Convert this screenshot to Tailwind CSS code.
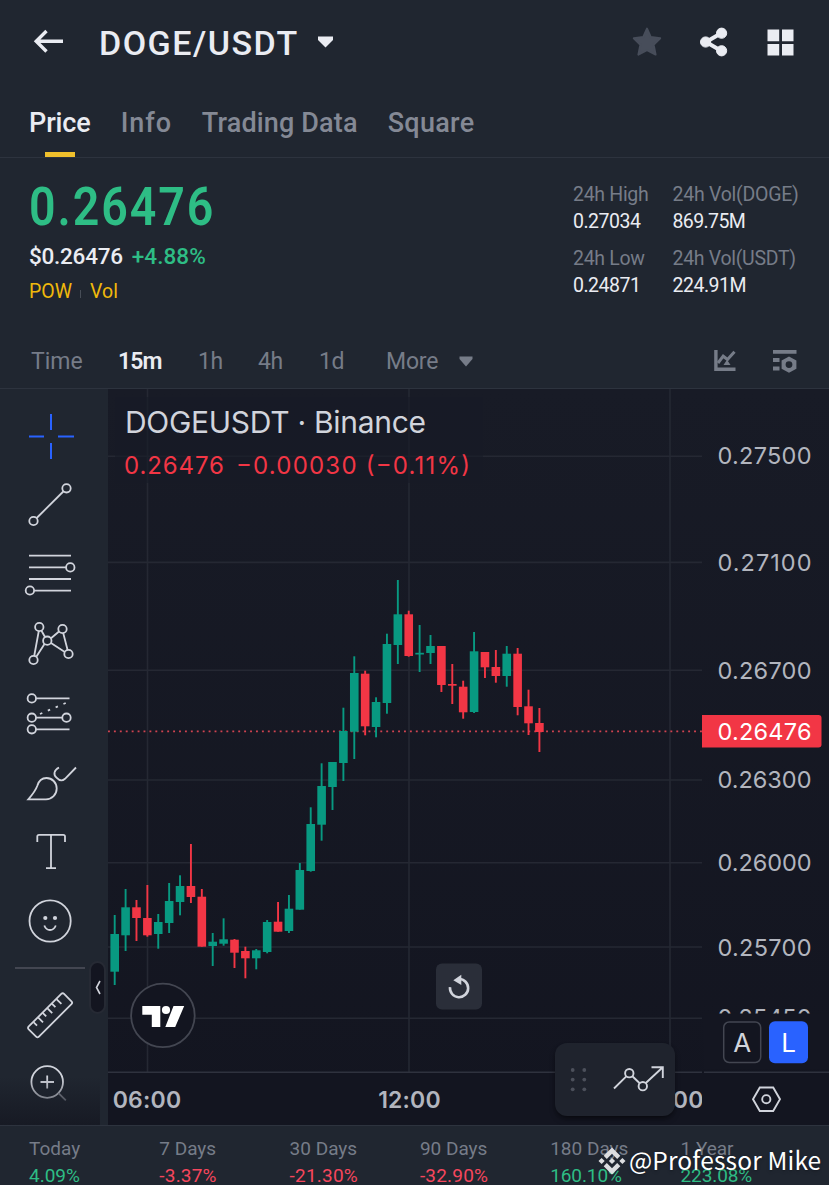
<!DOCTYPE html>
<html lang="en">
<head>
  <meta charset="UTF-8" />
  <meta name="viewport" content="width=device-width, initial-scale=1.0"/>
  <title>DOGE/USDT</title>
  <script src="https://cdn.jsdelivr.net/npm/@tailwindcss/browser@4"></script>
</head>
<body class="bg-[#202630] text-[#eaecf2] font-['Roboto',sans-serif] w-[829px] h-[1185px] overflow-hidden flex flex-col">
  <!-- header -->
  <header class="h-[86px] shrink-0 flex items-center pl-[33px] pr-[35px]">
    <svg class="w-[31px] h-[24px] -mt-1" viewBox="0 0 31 24" fill="none" stroke="#eaecf2" stroke-width="3.4"><path d="M30 12.2H3M13.5 2L3.2 12.2L13.5 22.5"/></svg>
    <h1 class="ml-[35px] text-[34px] font-medium leading-none tracking-[1.5px] whitespace-nowrap">DOGE/USDT</h1>
    <svg class="ml-[18px] w-[17px] h-[12px] -mt-[2px]" viewBox="0 0 17 12" fill="#eaecf2"><path d="M1 0.5H16V4L8.5 11.5L1 4z"/></svg>
    <div class="ml-auto flex items-center gap-[38px] -mt-[2px]">
      <svg class="w-[30px] h-[30px]" viewBox="0 0 30 30" fill="#474d5a" stroke="#474d5a" stroke-width="2" stroke-linejoin="round"><path d="M15 1.6L18.8 10.1L28.2 11.2L21.6 17.8L23.6 27.6L15 23.2L6.4 27.6L8.4 17.8L1.8 11.2L11.2 10.1z"/></svg>
      <svg class="w-[30px] h-[30px] -ml-px" viewBox="0 0 30 30" fill="#eaecf2" stroke="#eaecf2"><path d="M22.5 6L7 15L22.5 24" fill="none" stroke-width="4"/><circle cx="22.6" cy="6.2" r="5.1"/><circle cx="6.6" cy="15" r="5.1"/><circle cx="22.6" cy="23.8" r="5.1"/></svg>
      <svg class="w-[27px] h-[27px]" viewBox="0 0 27 27" fill="#eaecf2"><path d="M0.5 0.5h11.7v11.7H.5zM15 .5h11.5v11.7H15zM.5 15h11.7v11.5H.5zM15 15h11.5v11.5H15z"/></svg>
    </div>
  </header>

  <!-- tabs -->
  <nav class="h-[72px] shrink-0 flex items-start gap-[30px] pl-[29px] pt-[21px] border-b border-[#2d333e] text-[27px] leading-[32px] font-medium text-[#848995] whitespace-nowrap">
    <div class="relative text-[#eaecf2] h-[50px] tracking-[-0.1px]">Price<span class="absolute left-[16px] bottom-0 w-[30px] h-[5px] bg-[#f0c02c]"></span></div>
    <div class="tracking-[0.9px]">Info</div>
    <div class="tracking-[0.15px]">Trading Data</div>
    <div class="tracking-[0.3px]">Square</div>
  </nav>

  <!-- ticker -->
  <section class="h-[176px] shrink-0 flex justify-between pl-[29px] pr-[29px] whitespace-nowrap">
    <div class="pt-[23px]">
      <div class="w-[190px] origin-left scale-x-[0.87] text-[53.5px] leading-[52px] font-semibold text-[#2ebd85] tracking-[2.2px]">0.26476</div>
      <div class="mt-[9px] flex gap-[9px] text-[22.5px] leading-[28px] font-medium"><span class="tracking-[-0.25px]">$0.26476</span><span class="tracking-[0.05px] text-[#2ebd85]">+4.88%</span></div>
      <div class="mt-[9px] flex items-center text-[19.5px] leading-[26px] text-[#f0b90b]"><span>POW</span><span class="w-px h-[8px] bg-[#474d57] ml-[8px] mr-[9px] mt-1"></span><span>Vol</span></div>
    </div>
    <div class="pt-[24px] grid grid-cols-[99.5px_127.5px] grid-rows-[27px_37px_27px_26px] text-[19.5px] leading-[26px]">
      <div class="text-[#767c88] tracking-[-0.3px]">24h High</div><div class="text-[#767c88] tracking-[-0.25px]">24h Vol(DOGE)</div>
      <div class="tracking-[-0.5px]">0.27034</div><div class="tracking-[-0.6px]">869.75M</div>
      <div class="text-[#767c88] tracking-[-0.3px]">24h Low</div><div class="text-[#767c88] tracking-[-0.3px]">24h Vol(USDT)</div>
      <div class="tracking-[-0.5px]">0.24871</div><div class="tracking-[-0.5px]">224.91M</div>
    </div>
  </section>

  <!-- intervals -->
  <div class="h-[55px] shrink-0 flex items-center pt-[2px] pl-[31px] pr-[31px] border-b border-[#2d333e] text-[23px] text-[#767c88] whitespace-nowrap">
    <span class="w-[87px]">Time</span>
    <span class="w-[80px] text-[#eaecf2] font-semibold tracking-[-0.9px]">15m</span>
    <span class="w-[60px] tracking-[-0.4px]">1h</span>
    <span class="w-[61px] tracking-[-0.4px]">4h</span>
    <span class="w-[67px] tracking-[-0.4px]">1d</span>
    <span class="w-[73px] tracking-[-0.2px]">More</span>
    <svg class="w-[14px] h-[11px] -mt-[2px]" viewBox="0 0 14 11" fill="#767c88"><path d="M0.5 0.5h13v2.5L7 10.5L.5 3z"/></svg>
    <svg class="ml-auto w-[22px] h-[22px] -mt-[2px]" viewBox="0 0 22 22" fill="none" stroke="#767c88" stroke-width="3.4"><path d="M1.9 0V19.3H21.5"/><path d="M4 13L9.2 6.2L13.5 9.5L20.5 1.8" stroke-width="3"/><path d="M9.5 15L13 9.8L16.5 15z" fill="#767c88" stroke="none"/></svg>
    <svg class="ml-[36px] w-[26px] h-[24px] -mt-[2px]" viewBox="0 0 26 24" fill="#767c88"><path d="M1 1h23.5v3.8H1zM1 9h6.5v4H1zM1 17.5h6.5v4H1z"/><path fill-rule="evenodd" d="M17 7.4L24.4 11.4V19.8L17 23.8L9.6 19.8V11.4zM17 12.2a3.4 3.4 0 100 6.8a3.4 3.4 0 000-6.8z"/></svg>
  </div>

  <!-- chart -->
  <main class="h-[736px] shrink-0 flex relative">
    <aside class="w-[108px] pt-[13px] relative flex flex-col">
      <svg class="w-[100px] h-[69px]" viewBox="0 402 100 69" stroke="#2962ff" stroke-width="2"><path d="M51 414V430M51 443V459M29 436.5H44M58 436.5H74"/></svg>
      <svg class="w-[100px] h-[69px]" viewBox="0 471 100 69" fill="none" stroke="#d1d4dc" stroke-width="1.8"><path d="M63.3 491.5L36.7 518"/><circle cx="66.5" cy="488.3" r="4.2"/><circle cx="33.5" cy="521" r="4.2"/></svg>
      <svg class="w-[100px] h-[69px]" viewBox="0 540 100 69" fill="none" stroke="#d1d4dc" stroke-width="1.8"><path d="M29 555.6H71M29 567.4H66M29 579H71M34 590.6H71"/><circle cx="70.3" cy="567.4" r="4.2"/><circle cx="29.9" cy="590.5" r="4.2"/></svg>
      <svg class="w-[100px] h-[69px]" viewBox="0 609 100 69" fill="none" stroke="#d1d4dc" stroke-width="1.8"><path d="M38.8 631L34.2 656M41.5 630.7L45 637M51 638.3L59 631.5M63.2 633L67.6 650M64.8 652L51 643M44.5 644L36.3 656.8"/><circle cx="39.3" cy="627" r="4.2"/><circle cx="62.5" cy="629" r="4.2"/><circle cx="47.3" cy="640.7" r="4.2"/><circle cx="68.5" cy="654" r="4.2"/><circle cx="33.5" cy="660" r="4.2"/></svg>
      <svg class="w-[100px] h-[69px]" viewBox="0 678 100 69" fill="none" stroke="#d1d4dc" stroke-width="1.8"><path d="M36 698.4H69.5M36 717.7H62.3M36 729.3H69.5"/><path d="M40 714L68 702" stroke-dasharray="2.5 6"/><circle cx="31.8" cy="698.4" r="4.2"/><circle cx="31.8" cy="717.7" r="4.2"/><circle cx="66.5" cy="717.7" r="4.2"/><circle cx="31.8" cy="729.3" r="4.2"/></svg>
      <svg class="w-[100px] h-[69px]" viewBox="0 747 100 69" fill="none" stroke="#d1d4dc" stroke-width="1.8"><path d="M28.3 799.3H46C52 799 56.7 794.5 56.7 788.5C56.7 782.5 52 778 46.5 778C41 778 38.5 781.5 37.2 786C35.8 790 32.5 794.5 28.3 799.3z"/><path d="M59 767.5C54 770 53 774.5 56.5 777.7C59.5 781 62.5 781 65 778.8L76 767.5"/></svg>
      <svg class="w-[100px] h-[69px]" viewBox="0 816 100 69" fill="none" stroke="#d1d4dc" stroke-width="1.8"><path d="M37.3 842V836.5Q37.3 834.8 39 834.8H63.3Q65 834.8 65 836.5V842M51 835V868M46 868.2H56"/></svg>
      <svg class="w-[100px] h-[69px]" viewBox="0 885 100 69" fill="none" stroke="#d1d4dc" stroke-width="1.8"><circle cx="50.1" cy="921" r="20.6"/><path d="M44.3 925.5Q46 930 50 930Q54 930 55.8 925.5"/><g fill="#d1d4dc" stroke="none"><circle cx="45.3" cy="918" r="2.1"/><circle cx="55" cy="918" r="2.1"/></g></svg>
      <div class="ml-[15px] mt-[13px] mb-[11px] w-[70px] h-[2px] bg-[#434651]"></div>
      <svg class="w-[100px] h-[69px]" viewBox="0 980 100 69" fill="none" stroke="#d1d4dc" stroke-width="1.8"><g transform="translate(50.1 1015.3) rotate(-45)"><rect x="-25" y="-7.2" width="50" height="14.4" rx="2"/><path d="M-16.5 -7V-2M-10 -7V0M-3.5 -7V-2M3 -7V0M9.5 -7V-2M16 -7V0"/></g></svg>
      <svg class="w-[100px] h-[69px]" viewBox="0 1049 100 69" fill="none" stroke="#d1d4dc" stroke-width="1.8"><circle cx="47.2" cy="1082" r="15.8"/><path d="M47.2 1075.5V1088.5M40.5 1082H54"/><path d="M58.5 1093.2L65.8 1100.3" stroke="#8b8f99"/></svg>
      <div class="absolute left-0 bottom-0 w-[100px] h-[48px] bg-linear-to-b from-[#171a24]/0 to-[#171a24]"></div>
    </aside>

    <div class="w-[721px] flex flex-col bg-linear-to-b from-[#181b26] to-[#131520]">
      <svg id="chart" class="w-[721px] h-[684px] font-['Inter',sans-serif]" viewBox="108 389 721 684">
        <g stroke="#252833" stroke-width="1.6">
          <path d="M147.5 389V1072M409 389V1072M670 389V1072"/>
          <path d="M108 456.2H702M108 562.4H702M108 670.2H702M108 780H702M108 862.8H702M108 947H702M108 1018.3H702"/>
        </g>
        <path d="M108 1072.2H702M704 1072.2H829" stroke="#2f323e" stroke-width="1.6"/>
        <rect x="115" y="397" width="368" height="86" fill="#181b26" opacity=".6"/>
        <path d="M108 731.3H702" stroke="#d04350" stroke-width="1.8" stroke-dasharray="1.9 4.02"/>
        <g id="candles"></g>
        <text x="125" y="433" font-size="30" fill="#d1d4dc" textLength="301">DOGEUSDT · Binance</text>
        <g font-size="24" fill="#f23645">
          <text x="124" y="474.3" textLength="100">0.26476</text>
          <text x="236" y="474.3" textLength="234">−0.00030 (−0.11%)</text>
        </g>
        <g id="labels" font-size="23.5" fill="#b2b5be">
          <text x="717.5" y="464.3" textLength="94">0.27500</text>
          <text x="717.5" y="570.6" textLength="94">0.27100</text>
          <text x="717.5" y="678.5" textLength="94">0.26700</text>
          <text x="717.5" y="787.8" textLength="94">0.26300</text>
          <text x="717.5" y="871.2" textLength="94">0.26000</text>
          <text x="717.5" y="955.5" textLength="94">0.25700</text>
          <text x="717.5" y="1026.3" textLength="94">0.25450</text>
        </g>
        <path d="M702 715H818.5Q821.5 715 821.5 718V744.5Q821.5 747.5 818.5 747.5H702z" fill="#f23645"/>
        <text x="717.5" y="739.5" font-size="23.5" fill="#fff" textLength="94">0.26476</text>
        <!-- auto / log scale buttons -->
        <rect x="704" y="1013.5" width="125" height="56" fill="#141621"/>
        <rect x="723.7" y="1022" width="37" height="40.5" rx="5.5" fill="#131520" stroke="#434651" stroke-width="1.5"/>
        <rect x="769" y="1021.3" width="39" height="42" rx="6" fill="#2962ff"/>
        <g font-size="26" text-anchor="middle">
          <text x="742.3" y="1052" fill="#d1d4dc">A</text>
          <text x="788.5" y="1052" fill="#fff">L</text>
        </g>
        <!-- logo -->
        <circle cx="162.9" cy="1015.4" r="31.8" fill="#131520" stroke="#434651" stroke-width="1.8"/>
        <path d="M142.3 1006H160.3V1027H151.8V1014.7H142.3zM173.5 1006H184.2L175.2 1027H165.3z" fill="#fff"/>
        <circle cx="166" cy="1010" r="4.1" fill="#fff"/>
        <!-- reset -->
        <rect x="436" y="963.5" width="46" height="46" rx="6" fill="#2a2e39"/>
        <path d="M450 987.2A9.1 9.1 0 1 0 459 979" fill="none" stroke="#d1d4dc" stroke-width="2.6"/>
        <path d="M453.3 980.2L461.3 974.8V985z" fill="#d1d4dc"/>
      </svg>
      <!-- time axis -->
      <div class="h-[52px] flex bg-[#131520]">
        <div class="w-[594px] flex justify-between overflow-hidden pt-[12px] font-['Inter',sans-serif] text-[23px] leading-[30px] font-semibold text-[#b2b5be] tracking-[0.2px]">
          <span class="w-[78px] text-center">06:00</span><span class="w-[78px] text-center">12:00</span><span class="w-[78px] text-center -mr-[9px]">18:00</span>
        </div>
        <svg class="ml-[49px] mt-[12px] w-[30px] h-[28px]" viewBox="751 1085 30 28" fill="none" stroke="#d1d4dc" stroke-width="1.9"><path d="M753 1099.2L759.8 1087.5H773.2L780 1099.2L773.2 1111H759.8z"/><circle cx="766.3" cy="1099.2" r="4.1"/></svg>
      </div>
    </div>

    <!-- collapse handle -->
    <div class="absolute left-[89px] top-[572px] w-[17px] h-[53px] rounded-full bg-[#131520] border-2 border-[#262a34] flex items-center justify-center">
      <svg class="w-[6px] h-[15px]" viewBox="0 0 6 15" fill="none" stroke="#d1d4dc" stroke-width="1.6"><path d="M5 1L1.5 7.5L5 14"/></svg>
    </div>
    <!-- floating drawing toolbar -->
    <div class="absolute left-[555px] top-[654px] w-[120px] h-[73px] rounded-xl bg-[#1f232d] shadow-md shadow-black/40">
      <svg class="w-[120px] h-[73px]" viewBox="555 1043 120 73" fill="none" stroke="#d1d4dc" stroke-width="1.9"><g fill="#4c505b" stroke="none"><circle cx="572.7" cy="1070" r="1.9"/><circle cx="584.3" cy="1070" r="1.9"/><circle cx="572.7" cy="1079.6" r="1.9"/><circle cx="584.3" cy="1079.6" r="1.9"/><circle cx="572.7" cy="1089.3" r="1.9"/><circle cx="584.3" cy="1089.3" r="1.9"/></g><path d="M614 1088.5L626.3 1076.3M632.4 1076.2L639.7 1083.2M645.8 1083L662.5 1067.5M651.5 1067.2H662.8V1078"/><circle cx="629.3" cy="1073.2" r="4.2"/><circle cx="642.8" cy="1086.2" r="4.2"/></svg>
    </div>
  </main>

  <!-- performance -->
  <footer class="relative h-[60px] shrink-0 border-t border-[#2d333e] pt-[10px] pl-[29px] grid grid-cols-[repeat(6,130.3px)] text-[19px] leading-[26px] text-[#767c88] whitespace-nowrap overflow-hidden">
    <div>Today<div class="pt-px text-[#2ebd85]">4.09%</div></div>
    <div>7 Days<div class="pt-px text-[#f6465d] tracking-[0.2px]">-3.37%</div></div>
    <div>30 Days<div class="pt-px text-[#f6465d] tracking-[0.2px]">-21.30%</div></div>
    <div>90 Days<div class="pt-px text-[#f6465d] tracking-[0.2px]">-32.90%</div></div>
    <div>180 Days<div class="pt-px text-[#2ebd85] tracking-[-0.1px]">160.10%</div></div>
    <div>1 Year<div class="pt-px text-[#2ebd85] tracking-[-0.1px]">223.08%</div></div>
    <!-- watermark -->
    <div class="absolute left-[598px] top-[18px] flex items-center text-white">
      <svg class="w-[28px] h-[28px] mt-[2px]" viewBox="0 0 28 28" fill="#dcdde0"><path d="M14 .5L22.3 8.8L19.2 11.9L14 6.7L8.8 11.9L5.7 8.8zM14 27.5L22.3 19.2L19.2 16.1L14 21.3L8.8 16.1L5.7 19.2zM14 10.9L17.1 14L14 17.1L10.9 14zM3.6 10.9L6.7 14L3.6 17.1L.5 14zM24.4 10.9L27.5 14L24.4 17.1L21.3 14z"/></svg>
      <span class="ml-[3px] font-['Noto_Sans_CJK_SC',sans-serif] text-[24.5px] leading-[32px] tracking-[0.15px] text-shadow-md">@Professor Mike</span>
    </div>
  </footer>

  <script>
    const UP = '#089981';
    const DOWN = '#f23645';
    // [high, low, bodyTop, bodyBottom, up]
    const candles = [
      [915, 985, 934, 971.7, 1], [889, 951, 907.3, 935.3, 1], [900, 941, 907.3, 918, 0], [885, 936.7, 918, 935.3, 0],
      [914, 948.7, 922, 934, 1], [883, 933, 901, 923, 1], [875.3, 915.3, 886, 902, 1], [844, 903, 886, 897, 0],
      [889, 946.7, 896.7, 946.7, 0], [933, 966, 941.7, 946, 1], [918.3, 945.7, 939.3, 943.7, 1], [939, 968, 939.7, 952.7, 0],
      [946.7, 978.3, 951, 958.3, 0], [949, 969.3, 950.3, 958.3, 1], [920, 953.3, 922, 952, 1], [902, 931.7, 921.7, 931.7, 0],
      [895, 933, 908.7, 931, 1], [863, 909.7, 870, 909.7, 1], [807.3, 871.7, 824, 871, 1], [763.3, 840.7, 786, 824.7, 1],
      [762, 810, 762, 787, 1], [707.7, 781, 731, 763, 1], [656.3, 759, 673, 731.7, 1], [670.7, 735.3, 673.7, 726.3, 0],
      [697.3, 737.3, 702, 727, 1], [633.7, 713.7, 644, 703, 1], [580, 664, 614.3, 645, 1], [610.7, 656.7, 614.3, 656, 0],
      [625, 672, 652.8, 654.5, 1], [635, 664, 646, 653, 1], [646, 692, 646, 685, 0], [664, 704, 684, 685.7, 0],
      [680.7, 718.7, 686.7, 712.3, 0], [632, 713, 651.3, 712, 1], [652, 678, 652, 667.3, 0], [650, 682.7, 667, 676, 0],
      [646, 686.7, 653.7, 676, 1], [648, 715.3, 653.7, 707, 0], [689.7, 735, 706.3, 723.3, 0], [708, 752, 723, 732, 0]
    ];
    const group = document.getElementById('candles');
    function addRect(x, y, w, h, fill) {
      const r = document.createElementNS('http://www.w3.org/2000/svg', 'rect');
      r.setAttribute('x', x);
      r.setAttribute('y', y);
      r.setAttribute('width', w);
      r.setAttribute('height', h);
      r.setAttribute('fill', fill);
      group.appendChild(r);
    }
    candles.forEach(([high, low, top, bottom, up], i) => {
      const x = 114.7 + i * 10.89;
      const fill = up ? UP : DOWN;
      addRect(x - 0.95, high, 1.9, low - high, fill);
      addRect(x - 4.3, top, 8.6, bottom - top, fill);
    });
  </script>
</body>
</html>
